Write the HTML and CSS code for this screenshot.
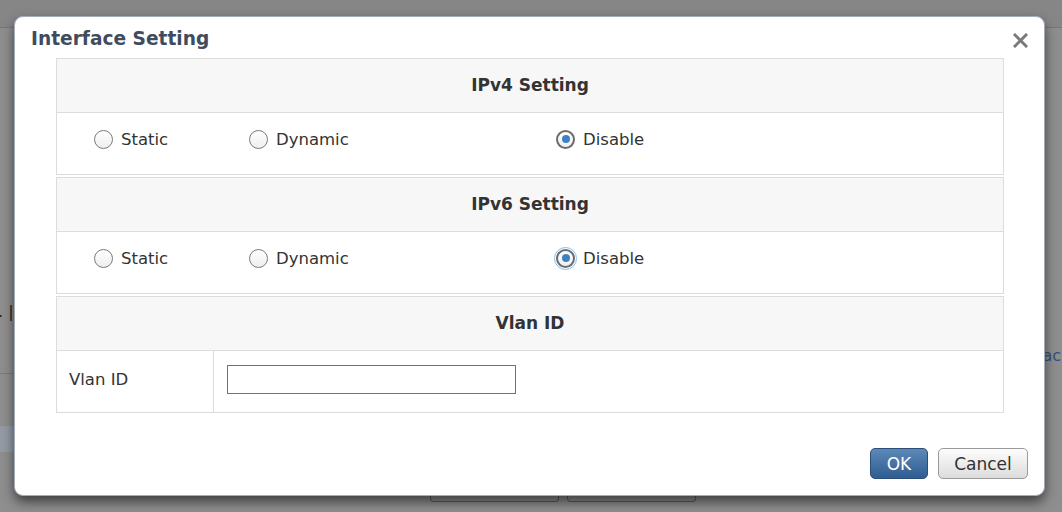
FILE: index.html
```html
<!DOCTYPE html>
<html lang="en">
<head>
  <meta charset="UTF-8" />
  <title>Interface Setting</title>
  <link rel="stylesheet" href="styles.css">
</head>
<body>
  <div class="page">
    <div class="page-top"></div>
    <div class="page-body">
      <div class="page-side">
        <div class="side-dot">. |</div>
        <div class="side-line"></div>
        <div class="side-band"></div>
      </div>
      <div class="page-main">
        <div class="main-link">ac</div>
      </div>
    </div>
    <div class="page-foot">
      <span class="foot-btn"></span>
      <span class="foot-btn"></span>
    </div>
  </div>

  <div class="dialog">
    <div class="dlg-head">
      <h2>Interface Setting</h2>
      <button class="close" title="Close">
        <svg width="15" height="15" viewBox="0 0 15 15">
          <path d="M2 2 L13 13 M13 2 L2 13" stroke="#7a7a7a" stroke-width="3" stroke-linecap="square"/>
        </svg>
      </button>
    </div>

    <table class="box">
      <tr><th colspan="3">IPv4 Setting</th></tr>
      <tr class="opts">
        <td class="c1"><label><input type="radio" name="v4"> Static</label></td>
        <td class="c2"><label><input type="radio" name="v4"> Dynamic</label></td>
        <td class="c3"><label><input type="radio" name="v4" checked> Disable</label></td>
      </tr>
    </table>

    <table class="box">
      <tr><th colspan="3">IPv6 Setting</th></tr>
      <tr class="opts">
        <td class="c1"><label><input type="radio" name="v6"> Static</label></td>
        <td class="c2"><label><input type="radio" name="v6"> Dynamic</label></td>
        <td class="c3"><label><input type="radio" name="v6" class="focused" checked> Disable</label></td>
      </tr>
    </table>

    <table class="box">
      <tr><th colspan="2">Vlan ID</th></tr>
      <tr class="vrow">
        <td class="lbl">Vlan ID</td>
        <td><input type="text" class="vlan"></td>
      </tr>
    </table>

    <div class="actions">
      <button class="btn ok">OK</button>
      <button class="btn cancel">Cancel</button>
    </div>
  </div>
</body>
</html>
```

FILE: styles.css
```css
html, body {
  margin: 0;
  height: 100%;
}
body {
  background: #8e8e8e;
  font-family: "DejaVu Sans", Verdana, sans-serif;
  overflow: hidden;
  position: relative;
}
.page {
  height: 512px;
  display: flex;
  flex-direction: column;
}
.page-top {
  height: 27px;
  background: #868686;
  border-bottom: 1px solid #777;
  flex: none;
}
.page-body {
  flex: 1;
  display: flex;
}
.page-side {
  width: 200px;
  border-right: 1px solid #6e6e6e;
  padding-top: 274px;
}
.side-dot {
  color: #222;
  font-size: 16px;
  margin-left: -2px;
  height: 71px;
}
.side-line {
  border-top: 1px solid #7b7b7b;
  height: 52px;
}
.side-band {
  height: 26px;
  background: #939aa3;
}
.page-main {
  flex: 1;
  padding-top: 318px;
  text-align: right;
}
.main-link {
  color: #34507a;
  font-size: 16px;
  margin-right: 1px;
}
.page-foot {
  height: 16px;
  display: flex;
  gap: 8px;
  padding-left: 430px;
}
.foot-btn {
  width: 127px;
  height: 5px;
  border: 1px solid #5a5a5a;
  border-top: none;
  border-radius: 0 0 4px 4px;
}

.dialog {
  position: absolute;
  left: 14px;
  top: 16px;
  width: 1031px;
  height: 480px;
  box-sizing: border-box;
  background: #fff;
  border: 1px solid #a4acb8;
  border-radius: 9px;
  box-shadow: 0 6px 12px rgba(0, 0, 0, 0.55);
  padding: 0 40px 0 41px;
}
.dlg-head {
  display: flex;
  align-items: center;
  justify-content: space-between;
  height: 41px;
  margin: 0 -24px 0 -25px;
}
.dlg-head h2 {
  margin: 0;
  padding-top: 2px;
  font-size: 18.6px;
  font-weight: bold;
  color: #3f4c60;
}
.close {
  border: none;
  background: none;
  padding: 0;
  margin-top: 6px;
  cursor: pointer;
  display: flex;
}

.box {
  width: 100%;
  border-collapse: collapse;
  border: 1px solid #dcdcdc;
  margin-bottom: 2px;
  font-size: 16.5px;
  color: #333;
}
.box th {
  height: 52px;
  background: #f7f7f7;
  border-bottom: 1px solid #dcdcdc;
  font-size: 17px;
  color: #333;
  padding: 0 0 1px;
}
.box td {
  padding: 0;
}
.opts td {
  height: 56px;
  padding-bottom: 5px;
}
.vrow td {
  height: 57px;
  padding-bottom: 4px;
}
.opts label {
  display: inline-flex;
  align-items: center;
  gap: 8px;
}
.opts .c1 {
  width: 155px;
  padding-left: 37px;
}
.c2 {
  width: 307px;
}
.vrow .lbl {
  width: 144px;
  padding-left: 12px;
  border-right: 1px solid #dcdcdc;
}

input[type="radio"] {
  appearance: none;
  -webkit-appearance: none;
  width: 19px;
  height: 19px;
  margin: 0;
  border: 1px solid #7a7a7a;
  border-radius: 50%;
  background: linear-gradient(#fff, #eee);
  position: relative;
  box-sizing: border-box;
}
input[type="radio"]:checked {
  border-color: #6c6c6c;
  border-width: 2px;
}
input[type="radio"]:checked::after {
  content: "";
  position: absolute;
  left: 3.5px;
  top: 3.5px;
  width: 8px;
  height: 8px;
  border-radius: 50%;
  background: #3b82c4;
}
input[type="radio"].focused {
  outline: 1px solid #86c0ea;
  outline-offset: 1px;
}
input[type="radio"]:focus {
  outline: none;
}

.vlan {
  width: 289px;
  height: 29px;
  margin-left: 13px;
  box-sizing: border-box;
  border: 1px solid #6f7478;
  padding: 2px 4px;
  font-size: 15px;
}

.actions {
  display: flex;
  justify-content: flex-end;
  gap: 10px;
  margin: 35px -24px 0 0;
}
.btn {
  height: 31px;
  border-radius: 5px;
  font-family: "DejaVu Sans", Verdana, sans-serif;
  font-size: 17px;
  cursor: pointer;
  padding: 0;
}
.ok {
  width: 58px;
  color: #fff;
  border: 1px solid #2b4f7a;
  background: linear-gradient(#5d89b8, #2f5d91);
}
.cancel {
  width: 90px;
  color: #333;
  border: 1px solid #9a9a9a;
  background: linear-gradient(#fdfdfd, #dcdcdc);
}
```
